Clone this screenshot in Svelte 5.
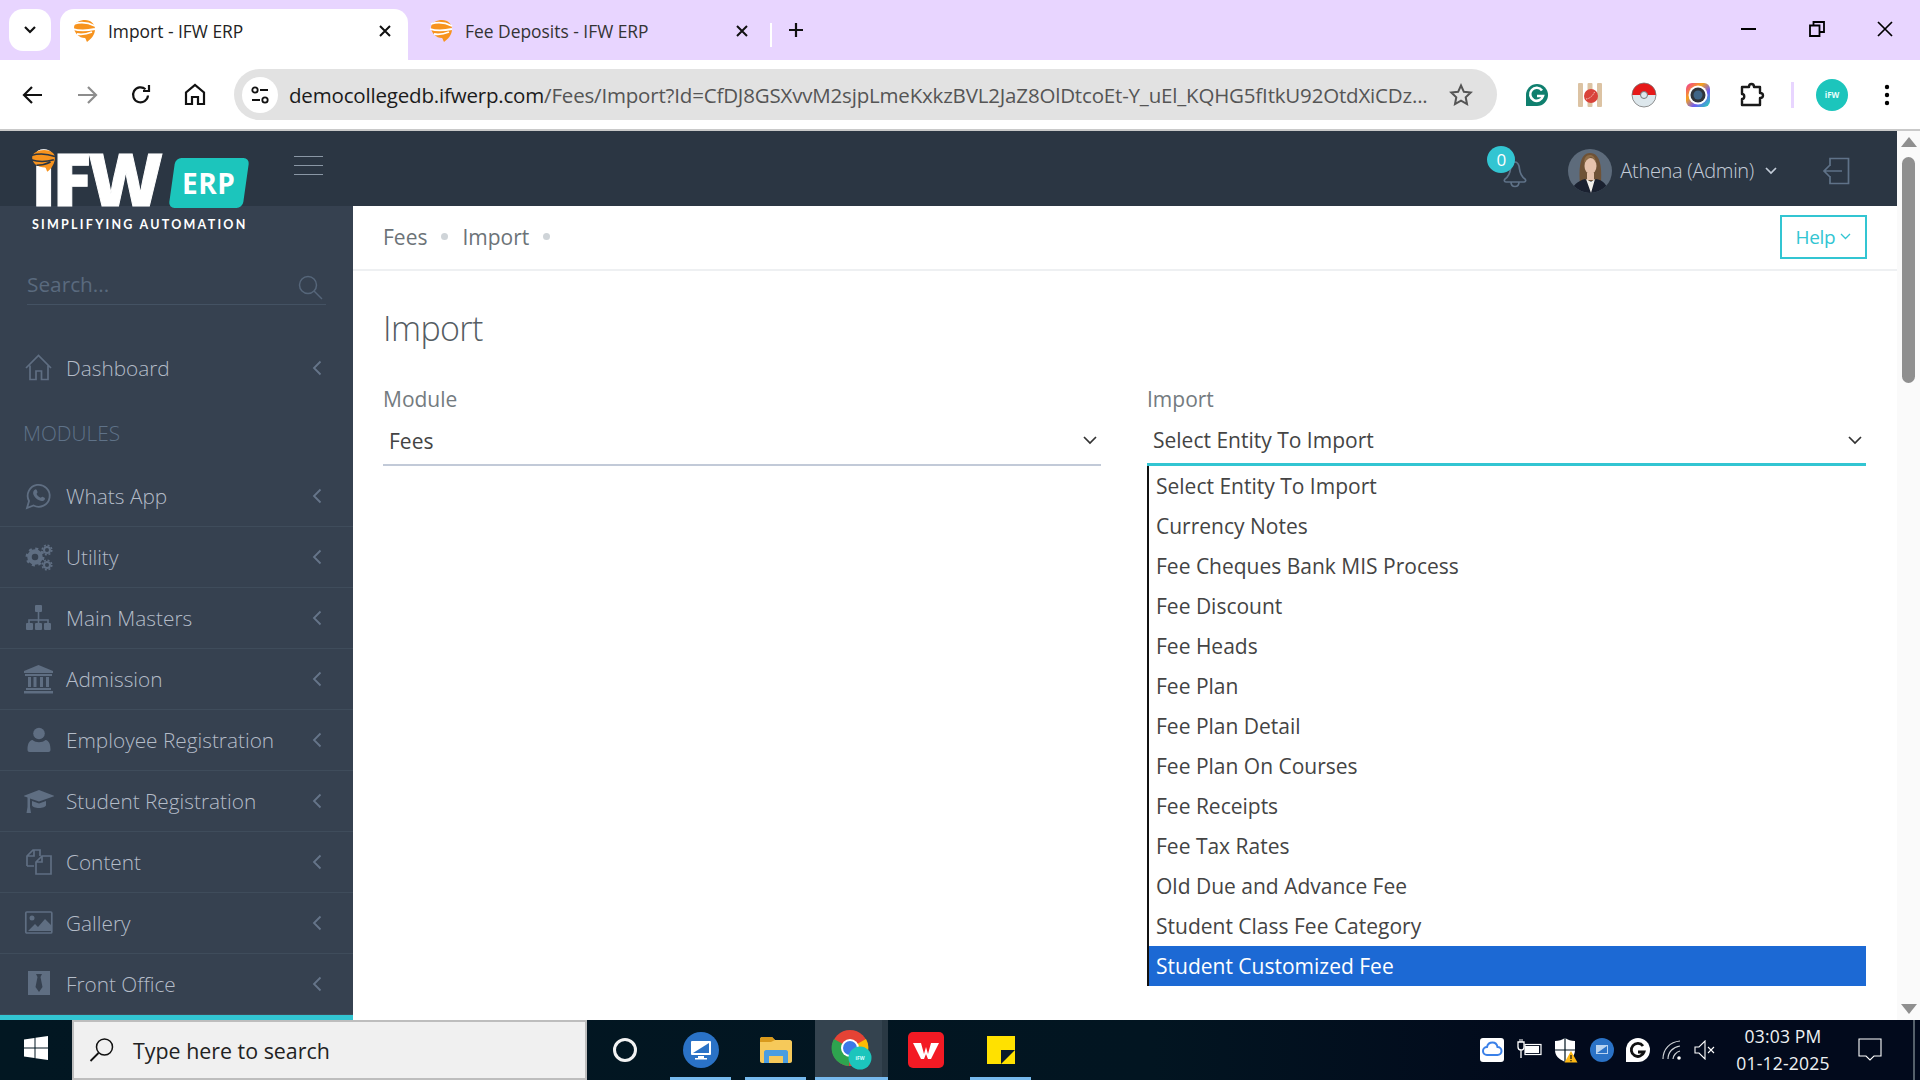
<script>
  const menu = [
    { label: 'Whats App', icon: 'whatsapp' },
    { label: 'Utility', icon: 'cogs' },
    { label: 'Main Masters', icon: 'sitemap' },
    { label: 'Admission', icon: 'bank' },
    { label: 'Employee Registration', icon: 'user' },
    { label: 'Student Registration', icon: 'grad' },
    { label: 'Content', icon: 'files' },
    { label: 'Gallery', icon: 'picture' },
    { label: 'Front Office', icon: 'tie' }
  ];
  const options = [
    'Select Entity To Import', 'Currency Notes', 'Fee Cheques Bank MIS Process', 'Fee Discount',
    'Fee Heads', 'Fee Plan', 'Fee Plan Detail', 'Fee Plan On Courses', 'Fee Receipts',
    'Fee Tax Rates', 'Old Due and Advance Fee', 'Student Class Fee Category', 'Student Customized Fee'
  ];
</script>

{#snippet favicon()}
  <svg class="favicon" viewBox="0 0 24 24" width="24" height="24">
    <path d="M2 8C3 3 8 1 13 1c6 0 10 4 10 9 0 6-4 10-8 13-1-2-1-3-2-4-6 0-11-5-11-11z" fill="#f7931e"/>
    <path d="M2 5c6-2 13-2 21 2M1 10c6 2 13 2 22 0M5 15c5 1 10 0 15-2" stroke="#fff" stroke-width="1.800" fill="none"/>
  </svg>
{/snippet}

{#snippet x(size = 14)}
  <svg width={size} height={size} viewBox="0 0 14 14"><path d="M2 2l10 10M12 2L2 12" stroke="#111" stroke-width="2" fill="none"/></svg>
{/snippet}

{#snippet chevLeft()}
  <svg class="chev" width="10" height="16" viewBox="0 0 10 16"><path d="M8.500 1.500L2 8l6.500 6.500" stroke="#66758a" stroke-width="1.800" fill="none"/></svg>
{/snippet}

{#snippet menuIcon(name)}
  <svg class="micon" width="30" height="30" viewBox="0 0 30 30" fill="#5f6e82">
    {#if name === 'home'}
      <path d="M2 15L14.500 2.500 27 15M6 12.500V26.500H12V18h5.500v8.500H24V12.500" fill="none" stroke="#5f6e82" stroke-width="1.700"/>
    {:else if name === 'whatsapp'}
      <path d="M3 27l2-7a11 11 0 1 1 4.500 4.500z" fill="none" stroke="#5f6e82" stroke-width="1.800"/>
      <path d="M10.500 9c1-1 1.800-.8 2.200 0l.8 2c.2.600-.8 1.400-.9 2 .8 1.800 2.200 3 4 3.800.7-.2 1.200-1.300 1.900-1.100l2 1c.6.400.6 1.200.1 2-1 1.400-3 1.600-5.500.6-2.800-1.200-5-3.500-5.800-6-.4-1.500-.1-3 1-4.300z"/>
    {:else if name === 'cogs'}
      <circle cx="11" cy="15" r="5.500" fill="none" stroke="#5f6e82" stroke-width="4.500"/>
      <circle cx="11" cy="15" r="8.200" fill="none" stroke="#5f6e82" stroke-width="2.500" stroke-dasharray="3 3.440"/>
      <circle cx="23" cy="8" r="3" fill="none" stroke="#5f6e82" stroke-width="2"/>
      <circle cx="23" cy="8" r="4.800" fill="none" stroke="#5f6e82" stroke-width="1.500" stroke-dasharray="2 1.770"/>
      <circle cx="23" cy="23" r="3" fill="none" stroke="#5f6e82" stroke-width="2"/>
      <circle cx="23" cy="23" r="4.800" fill="none" stroke="#5f6e82" stroke-width="1.500" stroke-dasharray="2 1.770"/>
    {:else if name === 'sitemap'}
      <rect x="11" y="2" width="7" height="7" rx="1"/>
      <path d="M14.500 9v6M5 21v-4h19v4M14.500 15v6" fill="none" stroke="#5f6e82" stroke-width="1.600"/>
      <rect x="2" y="20" width="7" height="7" rx="1"/><rect x="11" y="20" width="7" height="7" rx="1"/><rect x="20" y="20" width="7" height="7" rx="1"/>
    {:else if name === 'bank'}
      <path d="M14.500 1L29 7v2H0V7z"/><rect x="1" y="10" width="27" height="2"/>
      <rect x="4" y="13" width="3" height="10"/><rect x="9.500" y="13" width="3" height="10"/><rect x="16" y="13" width="3" height="10"/><rect x="22" y="13" width="3" height="10"/>
      <rect x="2" y="24" width="25" height="2"/><rect x="0" y="27" width="29" height="2.500"/>
    {:else if name === 'user'}
      <circle cx="15" cy="8.500" r="5.800"/>
      <path d="M5.500 27c-1.500 0-2-1-2-2.500 0-5 1.500-9 5-9.500 3.500 3 9.500 3 13 0 3.500.5 5 4.500 5 9.500 0 1.500-.5 2.500-2 2.500z"/>
    {:else if name === 'grad'}
      <path d="M15 4L31 10 15 15.500 6 12.500V21l1 6H2.500l1-6V11.500L-1 10z"/>
      <path d="M8 15l7 2.500 7-2.500v4c0 2-3.500 3-7 3s-7-1-7-3z"/>
    {:else if name === 'files'}
      <path d="M3 19V9l6-6h7v6M10 3v6H3M3 19h7" fill="none" stroke="#5f6e82" stroke-width="1.700"/>
      <path d="M12 27V15l6-6h9v18zM18 9v6h-6" fill="none" stroke="#5f6e82" stroke-width="1.700"/>
    {:else if name === 'picture'}
      <rect x="1.800" y="4" width="26" height="21" rx="1" fill="none" stroke="#5f6e82" stroke-width="1.700"/>
      <circle cx="8" cy="10" r="2.500"/><path d="M4 23l7-7 3 3 7-8 6 6v6z"/>
    {:else if name === 'tie'}
      <path fill-rule="evenodd" d="M4 2h22v24H4zM12 5l1.500 3-2 10 3.500 5 3.500-5-2-10L18 5z"/>
    {/if}
  </svg>
{/snippet}

<div class="screen">
  <div class="tabstrip">
    <button class="tablist" aria-label="tabs">
      <svg width="14" height="10" viewBox="0 0 14 10"><path d="M2 2l5 5 5-5" stroke="#111" stroke-width="2.200" fill="none"/></svg>
    </button>
    <div class="tab active">
      {@render favicon()}
      <span class="tabtitle">Import - IFW ERP</span>
      {@render x()}
    </div>
    <div class="tab">
      {@render favicon()}
      <span class="tabtitle">Fee Deposits - IFW ERP</span>
      {@render x()}
    </div>
    <span class="tabsep"></span>
    <svg class="plus" width="18" height="18" viewBox="0 0 18 18"><path d="M9 2v14M2 9h14" stroke="#111" stroke-width="2.200"/></svg>
    <div class="winctl">
      <svg width="16" height="16" viewBox="0 0 16 16"><path d="M0 8h15" stroke="#000" stroke-width="2"/></svg>
      <svg width="16" height="16" viewBox="0 0 16 16"><path d="M1 4.500h9.500V15H1zM4.500 4.500V1H15v10h-4.500" fill="none" stroke="#000" stroke-width="1.800"/></svg>
      <svg width="16" height="16" viewBox="0 0 16 16"><path d="M1 1l14 14M15 1L1 15" stroke="#000" stroke-width="1.700"/></svg>
    </div>
  </div>

  <div class="toolbar">
    <div class="nav">
      <svg width="22" height="22" viewBox="0 0 22 22"><path d="M20 11H3M10 3l-8 8 8 8" fill="none" stroke="#111" stroke-width="2.200"/></svg>
      <svg width="22" height="22" viewBox="0 0 22 22"><path d="M2 11h17M12 3l8 8-8 8" fill="none" stroke="#8d8d8d" stroke-width="2.200"/></svg>
      <svg width="22" height="22" viewBox="0 0 22 22"><path d="M18 11.500A7.500 7.500 0 1 1 15.500 5.200M13 7h6V1" fill="none" stroke="#111" stroke-width="2.200"/></svg>
      <svg width="22" height="24" viewBox="0 0 22 24"><path d="M2 21V9.500L11 2l9 7.500V21h-6v-7H8v7z" fill="none" stroke="#111" stroke-width="2.200"/></svg>
    </div>
    <div class="omnibox">
      <span class="tune">
        <svg width="20" height="20" viewBox="0 0 20 20"><circle cx="5" cy="5" r="2.700" fill="none" stroke="#111" stroke-width="1.800"/><path d="M10 5h8M2 15h8" stroke="#111" stroke-width="1.800"/><circle cx="15" cy="15" r="2.700" fill="none" stroke="#111" stroke-width="1.800"/></svg>
      </span>
      <span class="url"><b>democollegedb.ifwerp.com</b>/Fees/Import?Id=CfDJ8GSXvvM2sjpLmeKxkzBVL2JaZ8OlDtcoEt-Y_uEl_KQHG5fItkU92OtdXiCDz...</span>
      <svg class="star" width="24" height="24" viewBox="0 0 24 24"><path d="M12 2.500l2.900 6.300 6.800.8-5 4.700 1.300 6.800-6-3.400-6 3.400 1.300-6.800-5-4.700 6.800-.8z" fill="none" stroke="#555" stroke-width="2"/></svg>
    </div>
    <div class="exts">
      <svg width="24" height="26" viewBox="0 0 24 26"><path d="M1 13a11 11 0 1 1 11 11H1z" fill="#0f7f6e"/><path d="M17 8.500A6.500 6.500 0 1 0 18 14h-6" fill="none" stroke="#fff" stroke-width="2.600"/></svg>
      <svg width="26" height="26" viewBox="0 0 26 26"><rect x="1" y="1" width="5" height="24" rx="1" fill="#dcc3a3"/><rect x="10.500" y="1" width="5" height="24" rx="1" fill="#dcc3a3"/><rect x="20" y="1" width="5" height="24" rx="1" fill="#dcc3a3"/><circle cx="14" cy="14" r="7" fill="#d9433a"/><path d="M9 17c3 0 7-3 9-8" fill="none" stroke="#f5c8c0" stroke-width="1" stroke-dasharray="1.500 1"/></svg>
      <svg width="26" height="26" viewBox="0 0 26 26"><path d="M1 13a12 12 0 0 1 24 0z" fill="#e61919"/><path d="M1 13a12 12 0 0 0 24 0z" fill="#dde7ec"/><circle cx="13" cy="13" r="12" fill="none" stroke="#777" stroke-width=".8"/><circle cx="13" cy="13" r="3.500" fill="#dde7ec" stroke="#777" stroke-width="1"/></svg>
      <svg width="26" height="26" viewBox="0 0 26 26"><defs><linearGradient id="cam" x1="0" y1="0" x2="1" y2="1"><stop offset="0" stop-color="#f0359e"/><stop offset=".35" stop-color="#f7a21b"/><stop offset=".65" stop-color="#6d5cf6"/><stop offset="1" stop-color="#1fe0b0"/></linearGradient></defs><rect x="1" y="1" width="24" height="24" rx="6" fill="url(#cam)"/><circle cx="13" cy="13" r="9.500" fill="#fff"/><circle cx="13" cy="13" r="7.500" fill="#30343a"/><circle cx="13" cy="13" r="4.500" fill="#3f6587"/></svg>
      <svg width="26" height="26" viewBox="0 0 26 26"><path d="M3 5h7c0-4 5-4 5 0h6v6c4 0 4 5 0 5v7H3v-6c3 0 3-5 0-5z" fill="none" stroke="#1a1a1a" stroke-width="2.400" stroke-linejoin="round"/></svg>
      <span class="extsep"></span>
      <span class="profile">iFW</span>
      <svg class="dots" width="6" height="22" viewBox="0 0 6 22"><circle cx="3" cy="3" r="2.200"/><circle cx="3" cy="11" r="2.200"/><circle cx="3" cy="19" r="2.200"/></svg>
    </div>
  </div>

  <div class="viewport">
    <div class="app">
      <div class="logo">
        <svg class="logo-ball" width="26" height="26" viewBox="0 0 24 24">
          <path d="M2 8C2 4 7 1 13 1c6 0 10 3 10 7 0 5-3 10-7 13-1-2-1-3-2-4-7 0-12-4-12-9z" fill="#f7931e"/>
          <path d="M1 6c7-2 14-2 22 1M1 10c6 2 14 2 21 0M6 15c4 0 9-1 13-3" stroke="#2b3643" stroke-width="1.400" fill="none"/>
        </svg>
        <div class="logo-main">
          <span class="ifw">iFW</span>
          <span class="erp"><span>ERP</span></span>
        </div>
        <div class="tagline">SIMPLIFYING AUTOMATION</div>
      </div>

      <header class="top">
        <div class="burger"><i></i><i></i><i></i></div>
        <div class="top-right">
          <div class="bell">
            <svg width="26" height="28" viewBox="0 0 26 28"><path d="M13 2c-2 0-3 1-4 4-1 4 0 9-6 13-1 1-1 3 1 3h18c2 0 2-2 1-3-6-4-5-9-6-13-1-3-2-4-4-4zM9 22c0 6 8 6 8 0" fill="none" stroke="#5f7288" stroke-width="1.700"/></svg>
            <span class="badge">0</span>
          </div>
          <div class="userbox">
            <svg class="avatar" width="44" height="44" viewBox="0 0 44 44">
              <defs><clipPath id="av"><circle cx="22" cy="22" r="22"/></clipPath></defs>
              <g clip-path="url(#av)">
                <rect width="44" height="44" fill="#5d6b7b"/>
                <path d="M12 34C11 22 11 4 22 4s12 16 11 30l-6-2H18z" fill="#6f5236"/>
                <ellipse cx="22.500" cy="17" rx="6" ry="8" fill="#e6c2ac"/>
                <path d="M16 14c2-2 4-5 7-6 3 1 4 4 5 6-1-6-3-8-6-8-4 0-6 3-6 8z" fill="#8d6c47"/>
                <path d="M19 24h7v7h-7z" fill="#e6c2ac"/>
                <path d="M4 44c0-8 6-12 13-14l5 4 6-4c6 1 12 5 12 14z" fill="#1a2130"/>
                <path d="M18 30l5 14 4-14-4 3z" fill="#f2f0ec"/>
              </g>
            </svg>
            <span class="uname">Athena (Admin)</span>
            <svg width="12" height="8" viewBox="0 0 12 8"><path d="M1 1l5 5 5-5" fill="none" stroke="#c3ccd8" stroke-width="1.700"/></svg>
          </div>
          <svg class="logout" width="28" height="28" viewBox="0 0 28 28"><path d="M8 9V1.500h18.500v25H8V19M20 14H2M8 8l-6 6 6 6" fill="none" stroke="#5f7288" stroke-width="1.700"/></svg>
        </div>
      </header>

      <aside class="side">
        <div class="search">
          <span>Search...</span>
          <svg width="26" height="26" viewBox="0 0 26 26"><circle cx="11" cy="11" r="8.500" fill="none" stroke="#56667a" stroke-width="1.500"/><path d="M17 17l8 8" stroke="#56667a" stroke-width="1.500"/></svg>
        </div>
        <div class="dash">
          {@render menuIcon('home')}
          <span class="mlabel">Dashboard</span>
          {@render chevLeft()}
        </div>
        <div class="modules">MODULES</div>
        {#each menu as m}
          <div class="mitem">
            {@render menuIcon(m.icon)}
            <span class="mlabel">{m.label}</span>
            {@render chevLeft()}
          </div>
        {/each}
      </aside>

      <main class="content">
        <div class="crumbs">
          <span>Fees</span><i></i><span>Import</span><i></i>
          <button class="help">Help <svg width="11" height="8" viewBox="0 0 11 8"><path d="M1 1l4.500 4.500L10 1" fill="none" stroke="#32c5d2" stroke-width="1.300"/></svg></button>
        </div>
        <h1>Import</h1>
        <div class="form">
          <div class="field">
            <div class="flabel">Module</div>
            <div class="select">
              <span>Fees</span>
              <svg width="14" height="9" viewBox="0 0 14 9"><path d="M1 1l6 6 6-6" fill="none" stroke="#333" stroke-width="1.700"/></svg>
            </div>
          </div>
          <div class="field">
            <div class="flabel">Import</div>
            <div class="select open">
              <span>Select Entity To Import</span>
              <svg width="14" height="9" viewBox="0 0 14 9"><path d="M1 1l6 6 6-6" fill="none" stroke="#333" stroke-width="1.700"/></svg>
            </div>
            <div class="list">
              {#each options as o, i}
                <div class="opt" class:sel={i === options.length - 1}>{o}</div>
              {/each}
            </div>
          </div>
        </div>
      </main>
    </div>
    <div class="scrollbar">
      <svg width="16" height="10" viewBox="0 0 16 10"><path d="M0 10L8 0l8 10z" fill="#8f8f8f"/></svg>
      <div class="track"><div class="thumb"></div></div>
      <svg width="16" height="10" viewBox="0 0 16 10"><path d="M0 0L8 10 16 0z" fill="#8f8f8f"/></svg>
    </div>
  </div>

  <footer class="taskbar">
    <div class="start">
      <svg width="24" height="24" viewBox="0 0 24 24" fill="#fff"><path d="M0 3.500l10.500-1.500v9.500H0zM11.500 1.800L24 0v11.500H11.500zM0 12.500h10.500V22L0 20.500zM11.500 12.500H24V24l-12.500-1.800z"/></svg>
    </div>
    <div class="tsearch">
      <svg width="26" height="26" viewBox="0 0 26 26"><circle cx="15.500" cy="10" r="8" fill="none" stroke="#111" stroke-width="1.500"/><path d="M9.500 16L1.500 24" stroke="#111" stroke-width="1.800"/></svg>
      <span>Type here to search</span>
    </div>
    <div class="cortana"><span></span></div>
    <div class="tapp on">
      <svg width="36" height="36" viewBox="0 0 36 36"><circle cx="18" cy="18" r="18" fill="#2a72c6"/><rect x="8" y="9" width="20" height="14" rx="1" fill="#fff"/><path d="M10 21L26 11v10z" fill="#2a72c6"/><path d="M15 24h6v2h3v1.500H12V26h3z" fill="#fff"/></svg>
    </div>
    <div class="tapp on">
      <svg width="34" height="28" viewBox="0 0 34 28"><path d="M1 3c0-1 1-2 2-2h10l3 3h15c1 0 2 1 2 2v19c0 1-1 2-2 2H3c-1 0-2-1-2-2z" fill="#f6c95a"/><path d="M1 3c0-1 1-2 2-2h10l3 3-4 2H1z" fill="#d99a1c"/><path d="M5 27V16c0-1 1-2 2-2h20c1 0 2 1 2 2v11h-5v-7H10v7z" fill="#4a9de0"/></svg>
    </div>
    <div class="tapp on chrome">
      <svg width="42" height="42" viewBox="0 0 42 42">
        <circle cx="19" cy="19" r="18" fill="#e54335"/>
        <path d="M19 19L35 10a18 18 0 0 1-10 26z" fill="#fbbc04"/>
        <path d="M19 19L3 10a18 18 0 0 0 15 27z" fill="#2ea44f"/>
        <circle cx="19" cy="19" r="9" fill="#fff"/><circle cx="19" cy="19" r="7" fill="#3b78e7"/>
        <circle cx="29" cy="29" r="11.500" fill="#1cc5bc"/>
        <text x="29" y="31" font-size="5" fill="#dff" text-anchor="middle" font-family="Open Sans" font-weight="700">iFW</text>
      </svg>
      <span class="stack"></span>
    </div>
    <div class="tapp">
      <svg width="36" height="36" viewBox="0 0 36 36"><rect width="36" height="36" rx="5" fill="#f31a24"/><path d="M5 11h8l3 11 2-7 2 7 3-11h8l-8 16h-3l-2-5-2 5h-3z" fill="#fff"/></svg>
    </div>
    <div class="tapp on">
      <svg width="28" height="28" viewBox="0 0 28 28"><path d="M0 0h28v28H0z" fill="#ffe100"/><path d="M14 28V14h14L14 28z" fill="#08192a"/></svg>
    </div>
    <div class="tray">
      <svg width="24" height="24" viewBox="0 0 24 24"><rect width="24" height="24" rx="3" fill="#fff"/><path d="M7 17a4 4 0 0 1 0-8c.6-3 3-4.500 5.500-4.500S17 6.500 17.500 9a4 4 0 0 1 0 8z" fill="none" stroke="#3a80e8" stroke-width="2"/></svg>
      <svg width="26" height="24" viewBox="0 0 26 24"><path d="M2 4v5c0 2 1 3 3 3s3-1 3-3V4zM5 12v8" fill="none" stroke="#fff" stroke-width="1.300"/><path d="M4 1v3M6 1v3" stroke="#fff"/><rect x="9" y="6.500" width="16" height="10" fill="none" stroke="#fff" stroke-width="1.200"/><rect x="9" y="8" width="14" height="7" fill="#fff"/></svg>
      <svg width="24" height="26" viewBox="0 0 24 26"><path d="M11 1c3 2 6 3 10 3v9c0 6-4 9-10 12C5 22 1 19 1 13V4c4 0 7-1 10-3z" fill="#fff"/><path d="M11 1v24M1 13h20" stroke="#021521" stroke-width="1.200"/><path d="M17 14l6.500 11.500h-13z" fill="#fdb813"/><path d="M17 18v4M17 23v1.200" stroke="#111" stroke-width="1.200"/></svg>
      <svg width="24" height="24" viewBox="0 0 24 24"><circle cx="12" cy="12" r="12" fill="#2a72c6"/><rect x="6" y="7" width="12" height="9" fill="#b9d3f0"/><path d="M7 15l10-7v7z" fill="#2a72c6"/></svg>
      <svg width="24" height="24" viewBox="0 0 24 24"><path d="M0 12a12 12 0 1 1 12 12H0z" fill="#fff"/><path d="M17 8a6.500 6.500 0 1 0 1 6h-6" fill="none" stroke="#111" stroke-width="2.800"/></svg>
      <svg width="20" height="20" viewBox="0 0 20 20"><path d="M1 19C1 9 8 2 18 1M6 19c0-7 5-12 12-13M11 19c0-3 3-7 7-8" fill="none" stroke="#cfd3d6" stroke-width="1.200"/><circle cx="17" cy="18" r="1.800" fill="#fff"/></svg>
      <svg width="22" height="20" viewBox="0 0 22 20"><path d="M1 7h4l6-6v18l-6-6H1z" fill="none" stroke="#fff" stroke-width="1.100"/><path d="M14 7l6 6M20 7l-6 6" stroke="#fff" stroke-width="1.100"/></svg>
    </div>
    <div class="clock"><span>03:03 PM</span><span>01-12-2025</span></div>
    <svg class="notif" width="24" height="24" viewBox="0 0 24 24"><path d="M1 1h22v17h-7l-4 4-4-4H1z" fill="none" stroke="#fff" stroke-width="1.100"/></svg>
    <span class="showdesk"></span>
  </footer>
</div>

<style>
  :global(body) { margin: 0; background: #fff; }
  .screen {
    width: 1920px; height: 1080px; display: flex; flex-direction: column; overflow: hidden;
    font-family: "Open Sans", sans-serif;
  }
  svg { display: block; flex: none; }

  .tabstrip { height: 60px; background: #e8d5ff; display: flex; align-items: flex-end; flex: none; }
  .tablist {
    width: 42px; height: 42px; margin: 0 9px 9px 9px; padding: 0; border: 0; border-radius: 14px; background: #fff;
    display: flex; align-items: center; justify-content: center;
  }
  .tab {
    width: 348px; height: 51px; box-sizing: border-box; padding: 0 16px 8px 12px; display: flex; align-items: center;
    border-radius: 14px 14px 0 0; font-size: 17.400px; color: #333;
  }
  .tab.active { background: #fff; color: #222; }
  .tab + .tab { margin-left: 9px; }
  .favicon { margin-right: 12px; }
  .tabtitle { flex: 1; font-weight: 400; }
  .tabsep { width: 2px; height: 24px; background: #fff; margin: 10px 15px 0 5px; align-self: center; }
  .plus { margin-bottom: 21px; }
  .winctl { margin-left: auto; display: flex; gap: 52px; padding: 0 27px 0 0; align-self: center; margin-top: -2px; }

  .toolbar {
    height: 69px; background: #fff; display: flex; align-items: center; flex: none;
    border-radius: 14px 14px 0 0; box-sizing: border-box;
  }
  .nav { display: flex; gap: 32px; align-items: center; padding-left: 22px; width: 234px; box-sizing: border-box; flex: none; }
  .omnibox {
    width: 1263px; height: 51px; background: #e2e2e2; border-radius: 26px; display: flex; align-items: center; box-sizing: border-box;
    padding: 0 24px 0 8px; flex: none;
  }
  .tune {
    width: 36px; height: 36px; background: #fff; border-radius: 50%; display: flex; align-items: center; justify-content: center; margin-right: 11px;
  }
  .url { flex: 1; font-size: 20.500px; color: #555; white-space: nowrap; overflow: hidden; letter-spacing: -.18px; }
  .url b { font-weight: 400; color: #1b1b1b; }
  .exts { display: flex; align-items: center; padding-left: 28px; gap: 28px; }
  .extsep { width: 3px; height: 26px; background: #e8d5ff; margin-left: -2px; }
  .profile {
    width: 32px; height: 32px; background: #1cc5bc; border-radius: 50%; color: #e8fffd; font-size: 8px; font-weight: 700;
    display: flex; align-items: center; justify-content: center; margin-left: -6px;
  }
  .dots { margin-left: 8px; }

  .viewport { flex: 1; min-height: 0; display: flex; border-top: 2px solid #c9c9c9; }
  .app {
    flex: 1; min-width: 0; position: relative; display: grid; grid-template-columns: 353px 1fr; grid-template-rows: 75px 1fr;
  }
  .logo { position: absolute; left: 31px; top: 18px; width: 224px; z-index: 2; }
  .logo-ball { position: absolute; left: -1px; top: 0; }
  .logo-main { display: flex; align-items: flex-end; height: 59px; gap: 12px; padding-left: 1px; }
  .ifw {
    font-family: "Open Sans", sans-serif; font-weight: 800; font-size: 72px; line-height: 59px; color: #fff; letter-spacing: -3px; height: 59px; display: block;
    -webkit-text-stroke: 1px #fff;
  }
  .erp {
    width: 74px; height: 50px; background: #1cc5bc; border-radius: 6px; transform: skewX(-8deg); display: flex; align-items: center; justify-content: center; flex: none;
  }
  .erp span { transform: skewX(8deg); color: #fff; font-size: 28px; font-weight: 700; font-family: "Open Sans", sans-serif; letter-spacing: .5px; }
  .tagline { margin: 9px 0 0 1px; color: #fff; font-size: 12.500px; font-weight: 700; letter-spacing: 2.250px; white-space: nowrap; font-family: Lato, sans-serif; }

  .top { grid-column: 1 / 3; background: #2b3643; display: flex; align-items: center; padding-left: 294px; box-sizing: border-box; }
  .burger { display: flex; flex-direction: column; gap: 8px; margin-top: -6px; }
  .burger i { display: block; width: 29px; height: 1px; background: #8a97a5; }
  .top-right { margin-left: auto; display: flex; align-items: center; padding-top: 4px; }
  .bell { position: relative; margin-right: 40px; margin-top: 6px; }
  .badge {
    position: absolute; left: -15px; top: -14px; width: 28px; height: 27px; border-radius: 50%; background: #32c5d2; color: #fff;
    font-size: 17px; display: flex; align-items: center; justify-content: center;
  }
  .userbox { display: flex; align-items: center; }
  .avatar { margin-right: 8px; }
  .uname { color: #c3ccd8; font-size: 20px; font-weight: 300; margin-right: 11px; letter-spacing: -.3px; }
  .logout { margin-left: 45px; margin-right: 47px; }

  .side {
    background: #364150; border-bottom: 5px solid #32c5d2; overflow: hidden; display: flex; flex-direction: column; box-sizing: border-box; min-height: 0;
  }
  .search {
    margin: 58px 27px 0 27px; height: 40px; border-bottom: 1px solid #445263; display: flex; align-items: center; justify-content: space-between;
    color: #5a6a7e; font-size: 20.800px; font-weight: 400; flex: none;
  }
  .search svg { margin-top: 6px; margin-right: 3px; }
  .dash { height: 61px; margin-top: 32px; display: flex; align-items: center; padding: 0 31px 0 24px; flex: none; }
  .modules { color: #5f7288; font-size: 20.800px; font-weight: 300; margin: 13px 0 0 23px; height: 44px; line-height: 44px; flex: none; }
  .mitem { height: 61px; box-sizing: border-box; display: flex; align-items: center; padding: 0 31px 0 24px; border-bottom: 1px solid #3f4c5b; flex: none; }
  .modules + .mitem { margin-top: 11px; }
  .micon { margin-right: 12px; }
  .mlabel { flex: 1; color: #b4bcc8; font-size: 20.800px; font-weight: 300; white-space: nowrap; }

  .content { background: #fff; min-width: 0; padding: 0 30px; box-sizing: border-box; position: relative; }
  .crumbs {
    height: 61px; margin: 0 -30px; padding: 0 30px 2px; border-bottom: 2px solid #eef0f2; display: flex; align-items: center; color: #6c7378; font-size: 21px; font-weight: 400;
  }
  .crumbs i { width: 7px; height: 7px; border-radius: 50%; background: #cfd4d8; margin: 0 14px; }
  .help {
    margin-left: auto; width: 87px; height: 44px; border: 2px solid #32c5d2; background: #fff; color: #32c5d2; font: 400 19px "Open Sans", sans-serif; padding: 0;
    display: flex; align-items: center; justify-content: center; gap: 5px; box-sizing: border-box; letter-spacing: -.3px;
  }
  h1 { margin: 32px 0 0; font-size: 34px; font-weight: 300; color: #555d63; line-height: 50px; letter-spacing: -.6px; }
  .form { display: grid; grid-template-columns: 718px 719px; gap: 46px; margin-top: 31px; }
  .flabel { color: #747b80; font-size: 21px; line-height: 31px; }
  .select {
    height: 51px; padding: 2px 4px 0 6px; border-bottom: 2px solid #c2cad8; display: flex; align-items: center; justify-content: space-between; color: #444; font-size: 21px; box-sizing: border-box;
  }
  .select.open { border-bottom: 3px solid #32c5d2; }
  .list { border-left: 2px solid #111; box-sizing: border-box; }
  .opt { height: 40px; line-height: 40px; font-size: 21px; color: #444; padding-left: 7px; }
  .opt.sel { background: #1c69d4; color: #fff; }

  .scrollbar { width: 23px; background: #fafafa; display: flex; flex-direction: column; align-items: center; flex: none; padding: 6px 0 6px; box-sizing: border-box; }
  .track { flex: 1; width: 100%; padding-top: 10px; box-sizing: border-box; }
  .thumb { width: 13px; height: 226px; background: #8f8f8f; border-radius: 7px; margin-left: 5px; }

  .taskbar { height: 60px; background: linear-gradient(90deg, #021722, #021521 60%, #020a1c 80%); display: flex; align-items: center; flex: none; color: #fff; }
  .start { width: 72px; display: flex; justify-content: center; margin-top: -4px; }
  .tsearch {
    width: 515px; height: 60px; box-sizing: border-box; background: #f0f0f0; border: 2px solid #bdbdbd; display: flex; align-items: center; padding-left: 15px; color: #222; font-size: 21.400px;
  }
  .tsearch svg { margin-right: 18px; }
  .cortana { width: 83px; padding-right: 8px; box-sizing: border-box; display: flex; justify-content: center; }
  .cortana span { width: 18px; height: 18px; border: 3px solid #f2f2f2; border-radius: 50%; }
  .tapp { width: 61px; height: 60px; margin-right: 14px; box-sizing: border-box; display: flex; align-items: center; justify-content: center; position: relative; }
  .tapp.on::after { content: ""; position: absolute; left: 0; right: 0; bottom: 0; height: 3px; background: #76b9ed; }
  .chrome { width: 73px; background: #34434f; margin-left: -5px; margin-right: 7px; }
  .stack { position: absolute; right: 0; top: 0; bottom: 0; width: 6px; background: #2a3944; }
  .tray { margin-left: auto; display: flex; align-items: center; gap: 12px; }
  .clock { width: 112px; display: flex; flex-direction: column; align-items: center; font-size: 17.500px; line-height: 27px; margin-left: 11px; letter-spacing: .2px; color: #eef1f3; }
  .notif { margin: 0 31px 0 19px; }
  .showdesk { width: 2px; height: 60px; background: #55606a; margin-right: 5px; }
</style>
